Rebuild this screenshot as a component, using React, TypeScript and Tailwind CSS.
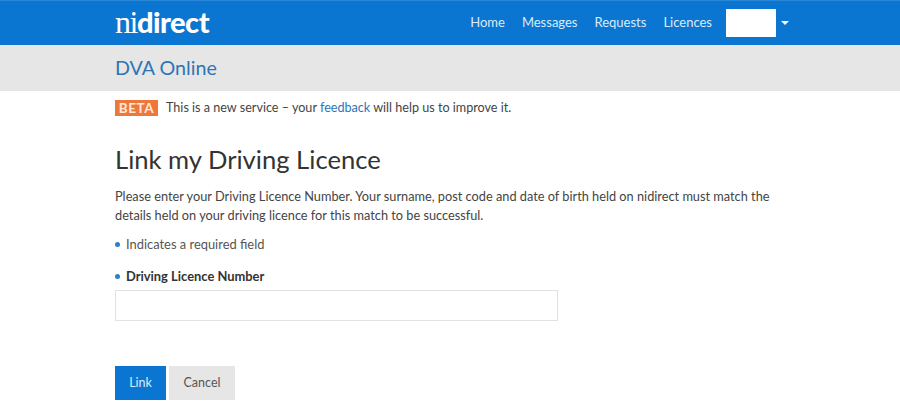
export default function App() {
  return (
    <div className="w-[900px] h-[413px] overflow-hidden bg-white text-[#333] font-['Lato','Liberation_Sans',sans-serif]">
      <header className="h-[45px] bg-[#0b76d1] border-t border-[#2a86d6] flex items-center pl-[115px] pr-[111px] justify-between">
        <div className="font-['Liberation_Serif',serif] text-[32px] leading-none text-white tracking-[-1.5px] flex items-baseline -mt-[2px]">
          <span className="font-normal">ni</span>
          <span className="font-black font-['Lato',sans-serif] text-[29px] tracking-[-0.5px]">direct</span>
        </div>
        <nav className="flex items-center text-[13px] text-[#dcebf8]">
          <a className="mr-[17px]">Home</a>
          <a className="mr-[17px]">Messages</a>
          <a className="mr-[17px]">Requests</a>
          <a className="mr-[14px]">Licences</a>
          <div className="w-[50px] h-[28px] bg-white mr-[5px]" />
          <span className="w-0 h-0 border-x-[4px] border-x-transparent border-t-[4px] border-t-white" />
        </nav>
      </header>
      <div className="h-[46px] bg-[#e6e6e6] flex items-center pl-[115px] text-[19.7px] text-[#2e75b6]">DVA Online</div>
      <div className="pl-[115px] mt-[9px] flex items-center h-[16px] text-[12.6px] text-[#444]">
        <span className="bg-[#f0773a] text-[#ffe9dc] font-bold text-[13.5px] tracking-[0.6px] w-[43px] h-[16px] leading-[16px] text-center mr-[8px]">BETA</span>
        <span>This is a new service – your <a className="text-[#2e75b6]">feedback</a> will help us to improve it.</span>
      </div>
      <main className="pl-[115px]">
        <h1 className="text-[25.6px] leading-[30px] mt-[28px] text-[#333]">Link my Driving Licence</h1>
        <p className="text-[12.76px] leading-[19px] mt-[13px] w-[670px] text-[#444]">
          Please enter your Driving Licence Number. Your surname, post code and date of birth held on nidirect must match the details held on your driving licence for this match to be successful.
        </p>
        <div className="flex items-center text-[12.9px] leading-[16px] mt-[11px] text-[#555]">
          <span className="w-[5px] h-[5px] rounded-full bg-[#2e7fc8] mr-[6px]" />
          Indicates a required field
        </div>
        <label className="flex items-center text-[12.9px] leading-[16px] mt-[16px] font-bold text-[#333]">
          <span className="w-[5px] h-[5px] rounded-full bg-[#2e7fc8] mr-[6px]" />
          Driving Licence Number
        </label>
        <div className="w-[443px] h-[31px] mt-[6px] border border-[#e2e2e2] bg-white" />
        <div className="flex mt-[45px] gap-[3px] text-[12.5px]">
          <button className="w-[51px] h-[34px] bg-[#0b76d1] text-[#dcebf8]">Link</button>
          <button className="w-[66px] h-[34px] bg-[#e6e6e6] text-[#555]">Cancel</button>
        </div>
      </main>
    </div>
  );
}
